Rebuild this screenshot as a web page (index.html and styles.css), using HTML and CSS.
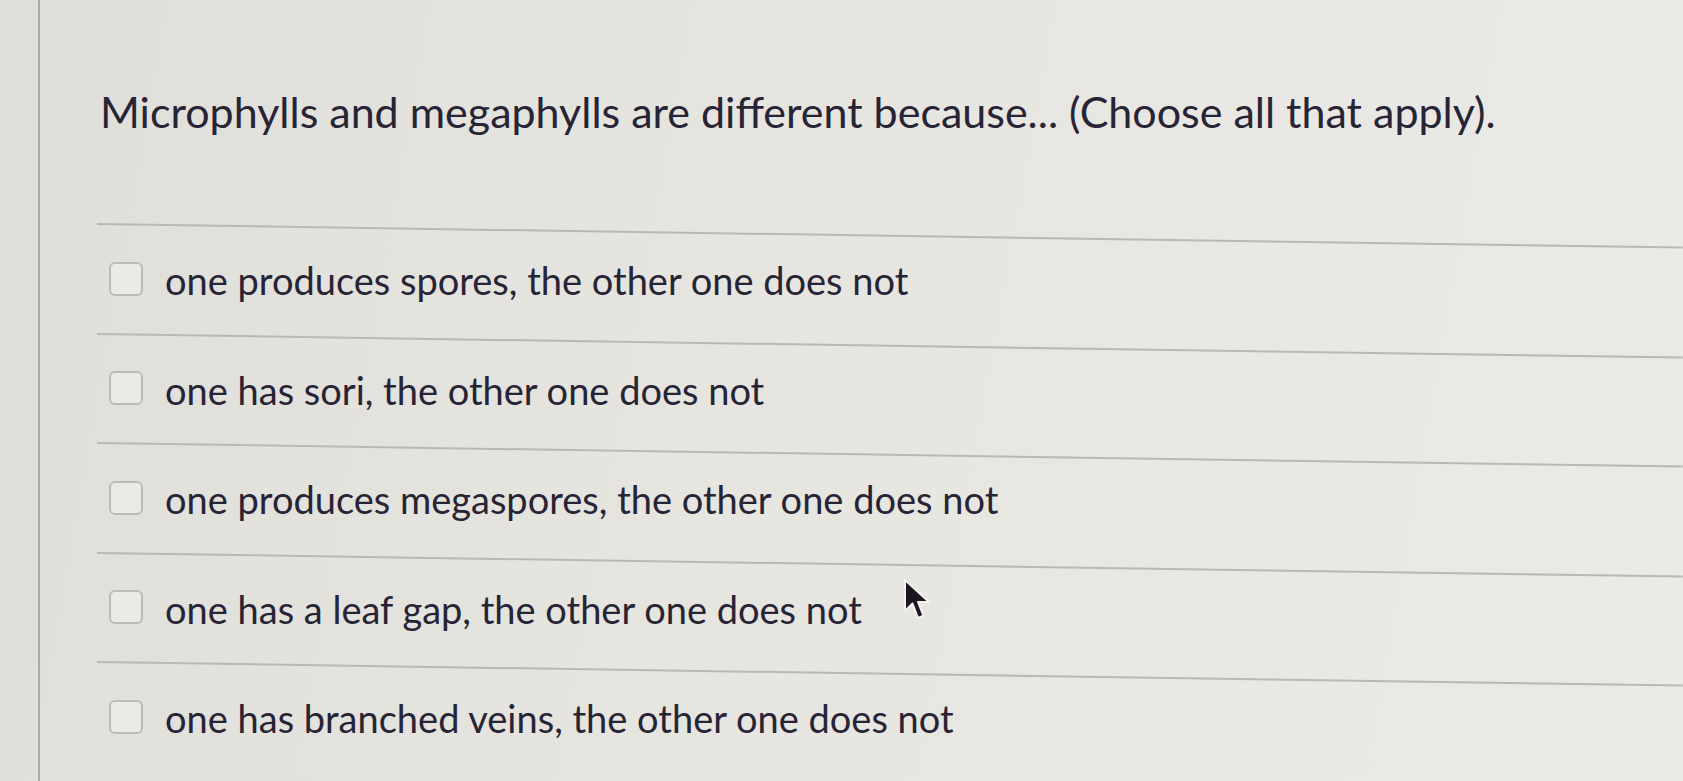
FILE: index.html
```html
<!DOCTYPE html>
<html lang="en">
<head>
    <meta charset="UTF-8">
    <meta name="viewport" content="width=device-width, initial-scale=1.0">
    <title>Quiz Question</title>
    <link rel="stylesheet" href="styles.css">
</head>
<body>
    <div class="page">
        <div class="question">
            <p class="question-text">Microphylls and megaphylls are different because... (Choose all that apply).</p>
            <div class="answers">
                <hr class="rule">
                <label class="answer">
                    <span class="box"></span>
                    <span class="label">one produces spores, the other one does not</span>
                </label>
                <hr class="rule">
                <label class="answer">
                    <span class="box"></span>
                    <span class="label">one has sori, the other one does not</span>
                </label>
                <hr class="rule">
                <label class="answer">
                    <span class="box"></span>
                    <span class="label">one produces megaspores, the other one does not</span>
                </label>
                <hr class="rule">
                <label class="answer">
                    <span class="box"></span>
                    <span class="label">one has a leaf gap, the other one does not</span>
                    <svg class="cursor" width="28" height="44" viewBox="0 0 28 44">
                        <path d="M2 2 L2 33 L9.5 25.5 L15 40 L20.5 37.8 L15 24 L26 24 Z" fill="#1c1620" stroke="#f4f3ef" stroke-width="2" stroke-linejoin="round"/>
                    </svg>
                </label>
                <hr class="rule">
                <label class="answer">
                    <span class="box"></span>
                    <span class="label">one has branched veins, the other one does not</span>
                </label>
            </div>
        </div>
    </div>
</body>
</html>
```
FILE: styles.css
```css
body {
    margin: 0;
    height: 100vh;
    overflow: hidden;
    background: linear-gradient(100deg, #dfded9 0%, #e6e5e0 45%, #ebeae6 100%);
    font-family: Lato, "Open Sans", sans-serif;
    color: #272435;
}

.page {
    margin-left: 38px;
    height: 100%;
    border-left: 2px solid #a9a8b4;
}

.question {
    padding-left: 57px;
}

.question-text {
    margin: 0;
    padding: 83px 0 0 3px;
    font-size: 43px;
    line-height: 58px;
}

.answers {
    margin-top: 82px;
}

.rule {
    margin: 0;
    border: 0;
    height: 2px;
    background: #b9b8b4;
    transform: rotate(0.85deg);
    transform-origin: 0 50%;
}

.answer {
    position: relative;
    display: flex;
    align-items: center;
    gap: 22px;
    height: 107.5px;
    padding-left: 12px;
}

.box {
    width: 30px;
    height: 30px;
    border: 2px solid #bcbbb7;
    border-radius: 6px;
    background: #ebeae6;
    flex-shrink: 0;
}

.label {
    font-size: 38px;
    padding-top: 3px;
}

.cursor {
    position: absolute;
    left: 806px;
    top: 24px;
}
```
